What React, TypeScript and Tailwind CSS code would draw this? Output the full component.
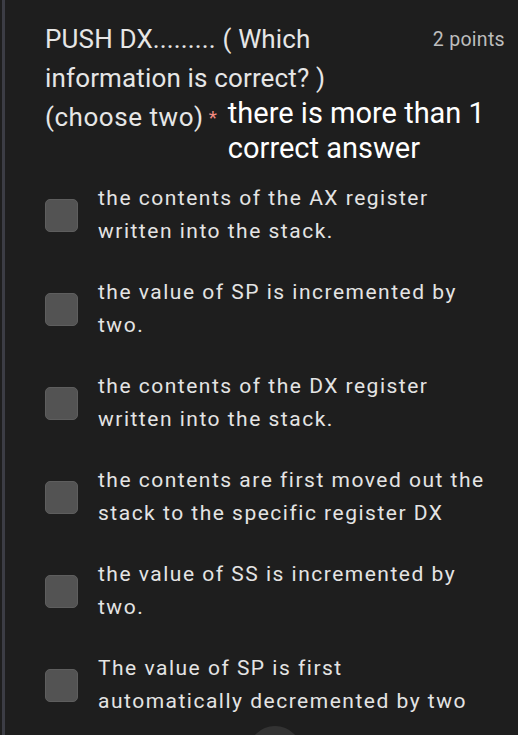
const options = [
  ["the contents of the AX register", "written into the stack."],
  ["the value of SP is incremented by", "two."],
  ["the contents of the DX register", "written into the stack."],
  ["the contents are first moved out the", "stack to the specific register DX"],
  ["the value of SS is incremented by", "two."],
  ["The value of SP is first", "automatically decremented by two"],
];

function Checkbox() {
  return (
    <div className="h-[33px] w-[33px] shrink-0 rounded-[5px] border border-[#5e5e5e] bg-[#535353]" />
  );
}

export default function App() {
  return (
    <div
      className="relative h-[735px] w-[518px] overflow-hidden bg-[#1e1e1e] text-[#e8e8e8]"
      style={{ fontFamily: "Roboto, 'Liberation Sans', sans-serif" }}
    >
      <div className="absolute left-[2px] top-0 h-full w-[3px] bg-[#3c3d45]" />

      <div className="pl-[45px] pr-[13px] pt-[20px]">
        <div className="flex items-start justify-between">
          <div className="text-[26px] leading-[39px] tracking-[0.15px] text-[#e6e6e6]">
            <div>PUSH DX......... ( Which</div>
            <div>information is correct? )</div>
          </div>
          <div className="pt-[7px] text-[19.5px] leading-[26px] tracking-[0.3px] text-[#bdbdbd]">2 points</div>
        </div>
        <div className="flex items-start">
          <div className="text-[26px] leading-[39px] tracking-[0.55px] text-[#e6e6e6]">(choose two)</div>
          <div className="ml-[5px] text-[19px] leading-[39px] text-[#f28b82]">*</div>
          <div className="ml-[11px] mt-[-2px] text-[29px] leading-[35px] text-white">
            <div>there is more than 1</div>
            <div>correct answer</div>
          </div>
        </div>
      </div>

      <div className="mt-[16px] flex flex-col gap-[28px] pl-[45px]">
        {options.map((o, i) => (
          <div key={i} className="flex items-center gap-[20px]">
            <Checkbox />
            <div className="text-[21px] leading-[33px] tracking-[1.5px] text-[#e4e4e4]">
              <div>{o[0]}</div>
              <div>{o[1]}</div>
            </div>
          </div>
        ))}
      </div>

      <div className="absolute left-[248px] top-[726px] h-[54px] w-[54px] rounded-full bg-[#333333]" />
    </div>
  );
}
